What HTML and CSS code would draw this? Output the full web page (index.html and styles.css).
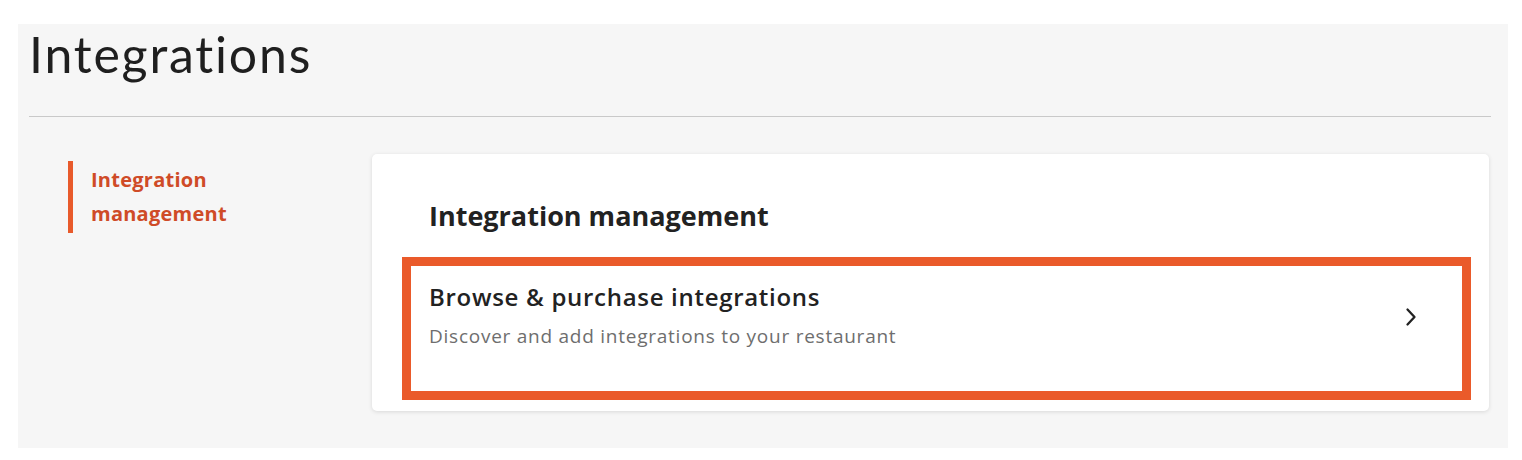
FILE: index.html
```html
<!DOCTYPE html>
<html lang="en">

<head>
    <meta charset="UTF-8">
    <meta name="viewport" content="width=device-width, initial-scale=1.0">
    <title>Integrations</title>
    <link rel="stylesheet" href="styles.css">
</head>

<body>
    <div class="page">
        <h1 class="page-title">Integrations</h1>
        <div class="divider"></div>

        <div class="content">
            <!-- Side navigation -->
            <nav class="sidenav">
                <a href="#" class="sidenav-item active">Integration<br>management</a>
            </nav>

            <!-- Main card -->
            <div class="card">
                <h2 class="card-title">Integration management</h2>

                <a href="#" class="row highlighted">
                    <div class="row-text">
                        <div class="row-title">Browse &amp; purchase integrations</div>
                        <div class="row-sub">Discover and add integrations to your restaurant</div>
                    </div>
                    <svg class="chevron" width="12" height="20" viewBox="0 0 12 20">
                        <path d="M2.5 2.5 L9.5 10 L2.5 17.5" fill="none" stroke="#222" stroke-width="2.3" stroke-linecap="round" stroke-linejoin="round"/>
                    </svg>
                </a>
            </div>
        </div>
    </div>
</body>

</html>
```

FILE: styles.css
```css
/* Base styles */
body {
    margin: 0;
    background-color: #fff;
    font-family: "Open Sans", "Noto Sans", sans-serif;
    color: #222;
}

/* Grey page panel */
.page {
    margin: 24px 14px 0 18px;
    height: 424px;
    background-color: #f6f6f6;
    padding: 0 17px 0 11px;
    box-sizing: border-box;
}

.page-title {
    margin: 0;
    font-family: Lato, "Open Sans", sans-serif;
    font-size: 50px;
    font-weight: 400;
    line-height: 60px;
    letter-spacing: 1.8px;
    font-variant-ligatures: none;
    color: #1f1f1f;
}

.divider {
    margin-top: 32px;
    border-top: 1px solid #c9c9c9;
}

/* Two column area */
.content {
    display: flex;
    margin-top: 37px;
}

.sidenav {
    width: 304px;
    padding-left: 39px;
    padding-top: 7px;
    flex-shrink: 0;
}

.sidenav-item {
    display: block;
    border-left: 5px solid #e85a2b;
    padding: 2px 0 2px 18px;
    font-size: 20px;
    font-weight: 700;
    line-height: 34px;
    letter-spacing: 0.25px;
    color: #cf4b27;
    text-decoration: none;
}

/* Card */
.card {
    flex: 1;
    margin-right: 2px;
    background-color: #fff;
    border-radius: 5px;
    box-shadow: 0 1px 4px rgba(0, 0, 0, 0.12);
    padding: 44px 18px 11px 30px;
}

.card-title {
    margin: 0 0 23px 27px;
    font-size: 27px;
    font-weight: 700;
    line-height: 36px;
    color: #222;
}

/* List row */
.row {
    display: flex;
    align-items: center;
    justify-content: space-between;
    padding: 15px 45px 42px 18px;
    text-decoration: none;
    color: #222;
}

.row.highlighted {
    border: 9px solid #ea5a2a;
    height: 68px;
}

.row-title {
    font-size: 24px;
    font-weight: 600;
    line-height: 30px;
    letter-spacing: 0.7px;
    color: #222;
}

.row-sub {
    margin-top: 11px;
    font-size: 19px;
    line-height: 26px;
    letter-spacing: 0.75px;
    color: #6e6e6e;
}

.chevron {
    display: block;
    margin-top: 4px;
}
```
